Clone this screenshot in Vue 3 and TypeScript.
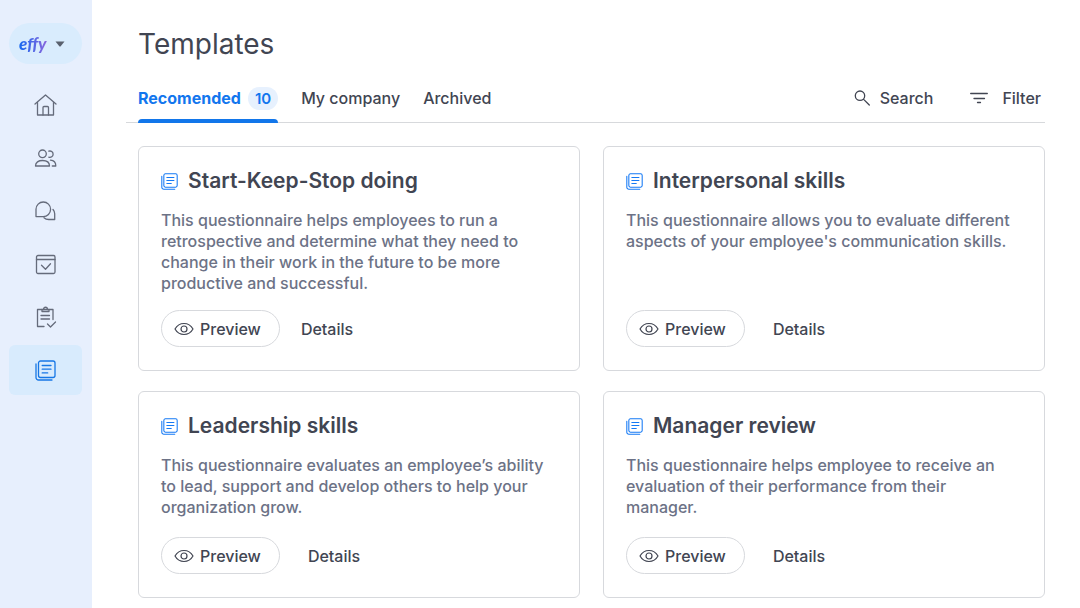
<script setup lang="ts">
import { ref } from 'vue'

interface NavItem {
  label: string
  paths: string[]
}

interface Template {
  title: string
  text: string
  compact?: boolean
}

const stack = [
  'M6.5 2h12.500a2 2 0 0 1 2 2v12.500a2 2 0 0 1-2 2H6.500a2 2 0 0 1-2-2V4a2 2 0 0 1 2-2z',
  'M2 5v13.5a2.500 2.500 0 0 0 2.500 2.500H18',
  'M8.200 6.500h8.800M8.200 10.200h8.800M8.200 13.900h5.500',
]

const navItems: NavItem[] = [
  {
    label: 'Home',
    paths: ['M1 10 11.500 1 22 10', 'M3.500 8.500v12.500h16V8.500', 'M9 21v-7.500a1 1 0 0 1 1-1h3.500a1 1 0 0 1 1 1v7.500'],
  },
  {
    label: 'People',
    paths: [
      'M8.500 3a3.800 3.800 0 1 1 0 7.600a3.800 3.800 0 1 1 0-7.600z',
      'M1.500 19c0-3.700 3-5.500 7-5.500s7 1.800 7 5.500z',
      'M14.800 4.200a3.200 3.200 0 1 1 0 6',
      'M16.500 13.200c3.500.3 5.300 2.300 5.300 5.800h-3.500',
    ],
  },
  {
    label: 'Conversations',
    paths: [
      'M2 16.500V9.300a7.300 7.300 0 1 1 7.300 7.300z',
      'M19 9.500c1.200 1.300 1.700 2.700 1.700 4.300v5.700h-6c-2 0-3.500-.6-4.700-1.700',
    ],
  },
  {
    label: 'Calendar',
    paths: [
      'M4 2.500h15.500a1.500 1.500 0 0 1 1.500 1.500v15a1.500 1.500 0 0 1-1.500 1.500H4a1.500 1.500 0 0 1-1.500-1.500V4A1.500 1.500 0 0 1 4 2.500z',
      'M2.500 6.500H21',
      'M7.500 12.200l4 4 5-5.500',
    ],
  },
  {
    label: 'Surveys',
    paths: [
      'M10 20.500H3.500V3.500h15.500v10',
      'M8 3.500V5.500h7V3.500M9.500 3.500c0-3 4-3 4 0',
      'M7 9.500h8.500M7 13h8.500',
      'M13.500 18l3 3 5-5',
    ],
  },
  { label: 'Templates', paths: stack },
]

const templates: Template[] = [
  {
    title: 'Start-Keep-Stop doing',
    text: 'This questionnaire helps employees to run a retrospective and determine what they need to change in their work in the future to be more productive and successful.',
    compact: true,
  },
  {
    title: 'Interpersonal skills',
    text: "This questionnaire allows you to evaluate different aspects of your employee's communication skills.",
  },
  {
    title: 'Leadership skills',
    text: 'This questionnaire evaluates an employee’s ability to lead, support and develop others to help your organization grow.',
  },
  {
    title: 'Manager review',
    text: 'This questionnaire helps employee to receive an evaluation of their performance from their manager.',
  },
]

const tabs: { label: string; count?: number }[] = [
  { label: 'Recomended', count: 10 },
  { label: 'My company' },
  { label: 'Archived' },
]

const activeNav = ref('Templates')
const activeTab = ref('Recomended')
</script>

<template>
  <div class="app">
    <aside class="sidebar">
      <button class="brand" type="button" aria-label="effy menu">
        <span class="brand-name">effy</span>
        <svg class="caret" viewBox="0 0 10 6" aria-hidden="true"><path d="M.5.500h9L5.500 5.500h-1z" /></svg>
      </button>
      <nav class="nav" aria-label="Main">
        <a
          v-for="item in navItems"
          :key="item.label"
          href="#"
          class="nav-link"
          :class="{ active: item.label === activeNav }"
          :aria-label="item.label"
          @click.prevent="activeNav = item.label"
        >
          <svg class="icon nav-icon" viewBox="0 0 23 23" aria-hidden="true">
            <path v-for="d in item.paths" :key="d" :d="d" />
          </svg>
        </a>
      </nav>
    </aside>

    <main class="main">
      <h1 class="title">Templates</h1>

      <div class="toolbar">
        <div class="tabs" role="tablist">
          <button
            v-for="tab in tabs"
            :key="tab.label"
            type="button"
            role="tab"
            class="tab"
            :class="{ active: tab.label === activeTab }"
            :aria-selected="tab.label === activeTab"
            @click="activeTab = tab.label"
          >
            {{ tab.label }}
            <span v-if="tab.count" class="count">{{ tab.count }}</span>
          </button>
        </div>
        <div class="tools">
          <button class="tool search" type="button">
            <svg class="icon tool-icon" viewBox="0 0 18 18" aria-hidden="true">
              <path d="M7 2a4.700 4.700 0 1 1 0 9.400a4.700 4.700 0 1 1 0-9.400zM10.400 10.100 16.300 16" />
            </svg>
            Search
          </button>
          <button class="tool filter" type="button">
            <svg class="icon tool-icon" viewBox="0 0 18 18" aria-hidden="true">
              <path d="M.7 4.500h16.600M4 9.500h10.500M7.500 13.500h3" />
            </svg>
            Filter
          </button>
        </div>
      </div>

      <section class="cards">
        <article v-for="card in templates" :key="card.title" class="card">
          <h2 class="card-title">
            <svg class="icon card-icon" viewBox="1 1 21 21" aria-hidden="true">
              <path v-for="d in stack" :key="d" :d="d" />
            </svg>
            {{ card.title }}
          </h2>
          <p class="card-text">{{ card.text }}</p>
          <div class="actions" :class="{ compact: card.compact }">
            <button class="preview" type="button">
              <svg class="icon eye" viewBox="0 0 20 14" aria-hidden="true">
                <path d="M1 7C3 3.500 6 1.500 10 1.500S17 3.500 19 7C17 10.500 14 12.500 10 12.500S3 10.500 1 7z" />
                <circle cx="10" cy="7" r="3" />
              </svg>
              Preview
            </button>
            <a class="details" href="#">Details</a>
          </div>
        </article>
      </section>
    </main>
  </div>
</template>

<style>
body {
  margin: 0;
  background: #fff;
}
</style>

<style scoped>
.app {
  display: flex;
  min-height: 100vh;
  color: #414552;
  font-family: Inter, 'Liberation Sans', sans-serif;
  font-size: 16px;
  font-weight: 500;
}

.app *,
.app {
  box-sizing: border-box;
}

button {
  padding: 0;
  border: 0;
  background: none;
  color: inherit;
  font: inherit;
  cursor: pointer;
}

a {
  color: inherit;
  text-decoration: none;
}

.icon {
  flex: none;
  fill: none;
  stroke: currentColor;
  stroke-width: 1.3;
  stroke-linecap: round;
  stroke-linejoin: round;
}

.sidebar {
  display: flex;
  flex: none;
  flex-direction: column;
  gap: 16px;
  width: 92px;
  padding: 23px 10px 23px 9px;
  background: #e7effd;
}

.brand {
  display: flex;
  align-items: center;
  gap: 8px;
  height: 41px;
  padding-left: 10px;
  border-radius: 21px;
  background: #d9ecfd;
}

.brand-name {
  background: linear-gradient(90deg, #1769f0, #8b66dc);
  background-clip: text;
  color: transparent;
  font-family: Lato, sans-serif;
  font-size: 17px;
  font-style: italic;
  font-weight: 900;
  line-height: 24px;
}

.caret {
  width: 10px;
  height: 6px;
  fill: #59606d;
}

.nav {
  display: flex;
  flex-direction: column;
  gap: 3px;
}

.nav-link {
  display: flex;
  align-items: center;
  justify-content: center;
  height: 50px;
  border-radius: 6px;
  color: #656b7b;
}

.nav-link.active {
  background: #d8ebfd;
  color: #1677e6;
}

.nav-icon {
  width: 23px;
  height: 23px;
}

.main {
  flex: 1;
  min-width: 0;
  padding: 26px 35px 10px 46px;
}

.title {
  margin: 0;
  font-size: 28px;
  font-weight: 400;
  line-height: 36px;
}

.toolbar {
  display: flex;
  justify-content: space-between;
  height: 61px;
  margin-left: -12px;
  padding-left: 12px;
  border-bottom: 1px solid #d7d9dc;
}

.tabs {
  display: flex;
  gap: 23px;
}

.tab {
  display: flex;
  align-items: center;
  gap: 7px;
  padding-top: 12px;
}

.tab.active {
  position: relative;
  color: #1276ee;
  font-weight: 700;
}

.tab.active::after {
  position: absolute;
  right: 0;
  bottom: -1px;
  left: 0;
  height: 4px;
  border-radius: 4px 4px 0 0;
  background: #1276ea;
  content: '';
}

.count {
  padding: 0 7px;
  border-radius: 12px;
  background: #e7f1fe;
  font-size: 15px;
  font-weight: 600;
  line-height: 23px;
}

.tools {
  display: flex;
  gap: 37px;
  padding-right: 4px;
}

.tool {
  display: flex;
  align-items: center;
  gap: 9px;
  padding-top: 12px;
}

.filter {
  gap: 14px;
}

.tool-icon {
  width: 18px;
  height: 18px;
}

.cards {
  display: grid;
  grid-template-columns: repeat(2, minmax(0, 1fr));
  gap: 20px 23px;
  margin-top: 23px;
}

.card {
  display: flex;
  flex-direction: column;
  min-height: 207px;
  padding: 19px 28px 23px 22px;
  border: 1px solid #d7d9dd;
  border-radius: 6px;
}

.card-title {
  display: flex;
  align-items: center;
  gap: 10px;
  margin: 0;
  font-size: 21px;
  font-weight: 600;
  line-height: 30px;
}

.card-icon {
  width: 17px;
  height: 17px;
  color: #1479f5;
}

.card-text {
  margin: 14px 0 16px;
  color: #6c7286;
  line-height: 21px;
}

.actions {
  display: flex;
  align-items: center;
  gap: 28px;
  margin-top: auto;
}

.actions.compact {
  gap: 21px;
}

.preview {
  display: flex;
  align-items: center;
  gap: 6px;
  height: 37px;
  padding: 0 18px 0 12px;
  border: 1px solid #d7d9dd;
  border-radius: 19px;
}

.eye {
  width: 20px;
  height: 14px;
  stroke-width: 1.2;
}

.preview,
.details,
.tool,
.tab {
  line-height: 24px;
}
</style>
